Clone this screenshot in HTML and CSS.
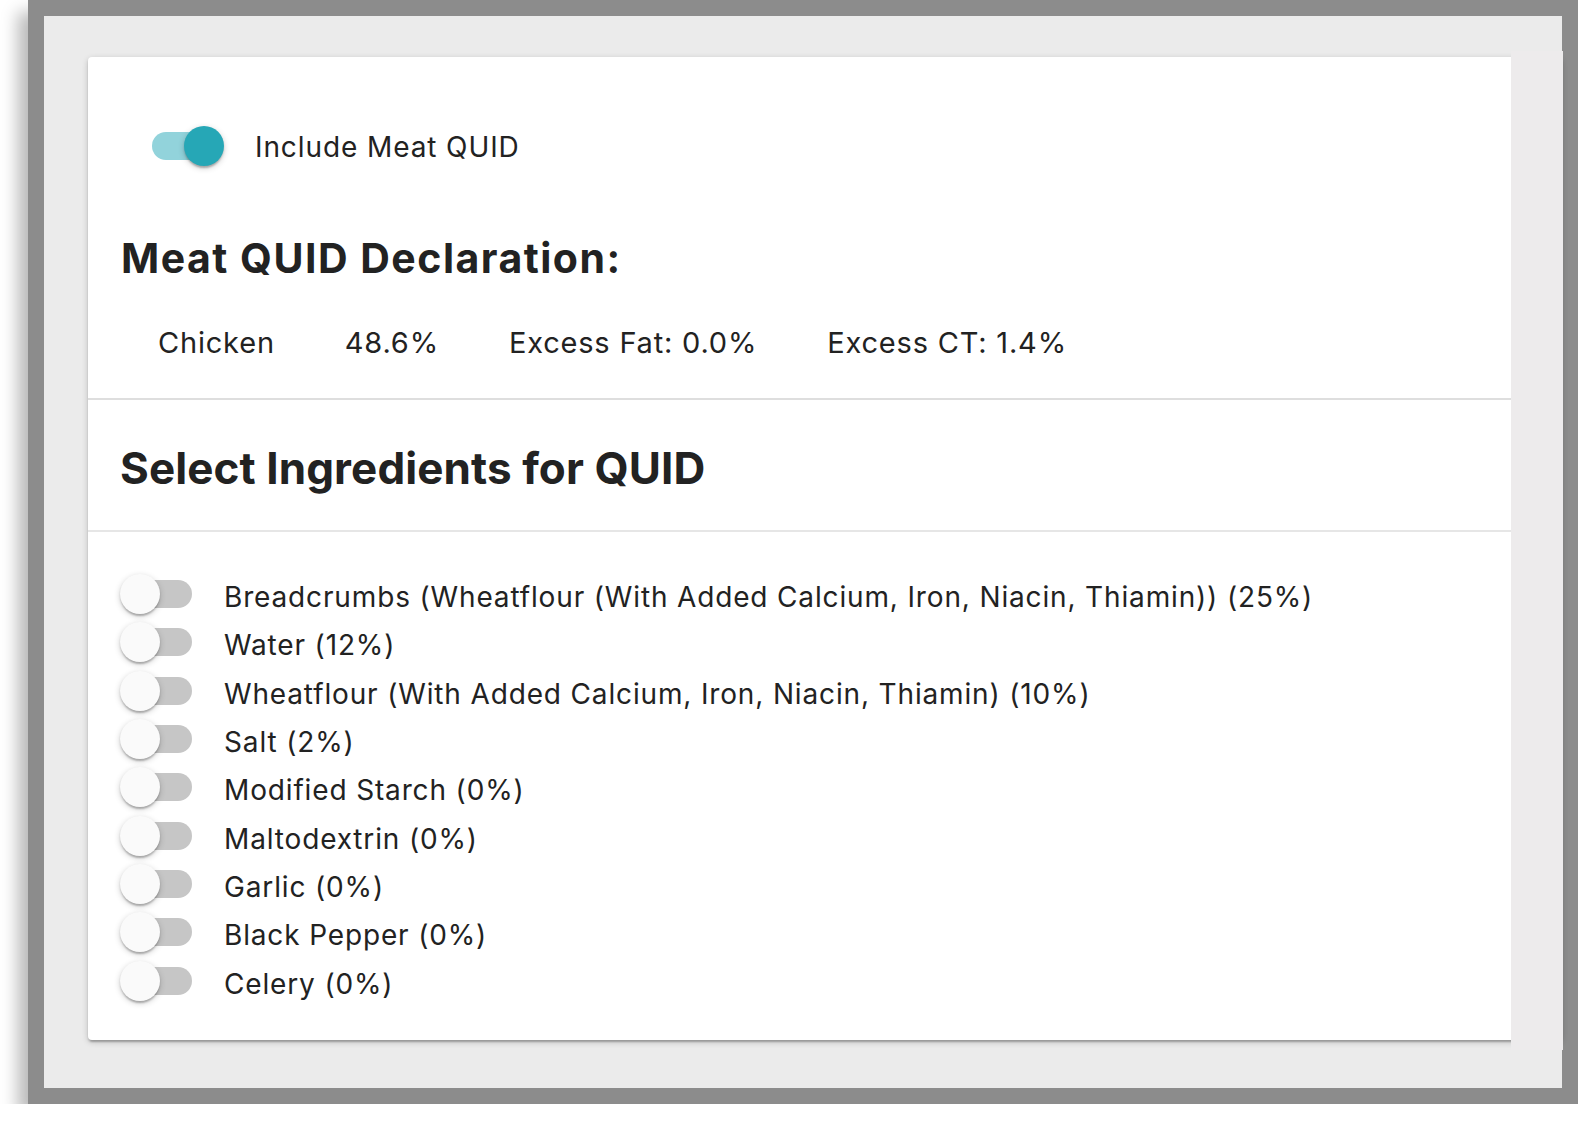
FILE: index.html
```html
<!DOCTYPE html>
<html lang="en">
<head>
<meta charset="utf-8">
<title>Meat QUID</title>
<link rel="stylesheet" href="styles.css">
</head>
<body>
<div class="frame">
  <div class="stage">
    <div class="card">
      <div class="top">
        <div class="main-toggle">
          <span class="switch on"><span class="track"></span><span class="thumb"></span></span>
          <span class="main-label">Include Meat QUID</span>
        </div>
        <h2 class="decl-title">Meat QUID Declaration:</h2>
        <div class="values">
          <span class="value">Chicken</span>
          <span class="value">48.6%</span>
          <span class="value">Excess Fat: 0.0%</span>
          <span class="value">Excess CT: 1.4%</span>
        </div>
      </div>
      <div class="divider"></div>
      <div class="select-head">
        <h2 class="select-title">Select Ingredients for QUID</h2>
      </div>
      <div class="divider light"></div>
      <ul class="ingredients">
        <li class="ing"><span class="switch"><span class="track"></span><span class="thumb"></span></span><span class="ing-label">Breadcrumbs (Wheatflour (With Added Calcium, Iron, Niacin, Thiamin)) (25%)</span></li>
        <li class="ing"><span class="switch"><span class="track"></span><span class="thumb"></span></span><span class="ing-label">Water (12%)</span></li>
        <li class="ing"><span class="switch"><span class="track"></span><span class="thumb"></span></span><span class="ing-label">Wheatflour (With Added Calcium, Iron, Niacin, Thiamin) (10%)</span></li>
        <li class="ing"><span class="switch"><span class="track"></span><span class="thumb"></span></span><span class="ing-label">Salt (2%)</span></li>
        <li class="ing"><span class="switch"><span class="track"></span><span class="thumb"></span></span><span class="ing-label">Modified Starch (0%)</span></li>
        <li class="ing"><span class="switch"><span class="track"></span><span class="thumb"></span></span><span class="ing-label">Maltodextrin (0%)</span></li>
        <li class="ing"><span class="switch"><span class="track"></span><span class="thumb"></span></span><span class="ing-label">Garlic (0%)</span></li>
        <li class="ing"><span class="switch"><span class="track"></span><span class="thumb"></span></span><span class="ing-label">Black Pepper (0%)</span></li>
        <li class="ing"><span class="switch"><span class="track"></span><span class="thumb"></span></span><span class="ing-label">Celery (0%)</span></li>
      </ul>
    </div>
    <div class="strip"></div>
  </div>
</div>
</body>
</html>
```

FILE: styles.css
```css
html, body {
  margin: 0;
  padding: 0;
  background: #ffffff;
  overflow: hidden;
}
body {
  font-family: Inter, Roboto, "Liberation Sans", sans-serif;
  color: #222222;
}
.frame {
  box-sizing: border-box;
  margin-left: 28px;
  width: 1550px;
  height: 1104px;
  border: 16px solid #8c8c8c;
  box-shadow: -10px 12px 16px rgba(0, 0, 0, 0.28);
}
.stage {
  position: relative;
  height: 100%;
  background: #ebebeb;
  padding: 41px 0 0 44px;
  box-sizing: border-box;
}
.card {
  width: 1474px;
  height: 983px;
  background: #ffffff;
  border-radius: 4px;
  box-shadow: 0 2px 6px rgba(0, 0, 0, 0.2), 0 2px 2px rgba(0, 0, 0, 0.14), 0 4px 2px -2px rgba(0, 0, 0, 0.12);
  box-sizing: border-box;
}
.strip {
  position: absolute;
  left: 1467px;
  top: 35px;
  width: 52px;
  height: 999px;
  background: #edebec;
}
.top {
  padding: 69px 0 0 0;
}
.main-toggle {
  display: flex;
  align-items: center;
  height: 40px;
  padding-left: 64px;
}
.switch {
  position: relative;
  display: inline-block;
  width: 72px;
  height: 40px;
  flex: none;
}
.track {
  position: absolute;
  left: 4px;
  top: 6px;
  width: 68px;
  height: 28px;
  border-radius: 14px;
  background: #c6c6c6;
}
.thumb {
  position: absolute;
  left: 0;
  top: 0;
  width: 40px;
  height: 40px;
  border-radius: 50%;
  background: #fafafa;
  box-shadow: 0 2px 6px rgba(0, 0, 0, 0.2), 0 2px 2px rgba(0, 0, 0, 0.14), 0 4px 2px -2px rgba(0, 0, 0, 0.12);
}
.switch.on .track {
  left: 0;
  background: #92d3db;
}
.switch.on .thumb {
  left: 32px;
  background: #26a7b6;
}
.main-label {
  margin-left: 31px;
  padding-top: 2px;
  font-size: 28px;
  letter-spacing: 0.9px;
}
.decl-title {
  margin: 68px 0 0 33px;
  font-size: 41px;
  line-height: 48px;
  font-weight: 700;
  letter-spacing: 1.5px;
}
.values {
  display: flex;
  margin: 43px 0 0 35px;
  font-size: 29px;
  line-height: 36px;
  letter-spacing: 0.8px;
}
.value {
  padding: 0 35px;
}
.divider {
  height: 2px;
  background: #dedede;
  margin-top: 37px;
}
.divider.light {
  background: #e6e6e6;
  margin-top: 0;
}
.select-head {
  padding: 41px 0 35px 32px;
}
.select-title {
  margin: 0;
  font-size: 44px;
  line-height: 54px;
  font-weight: 700;
  letter-spacing: 0.1px;
}
.ingredients {
  list-style: none;
  margin: 0;
  padding: 38px 0 0 32px;
}
.ing {
  display: flex;
  align-items: center;
  height: 48.3px;
}
.ing-label {
  margin-left: 32px;
  font-size: 28px;
  padding-top: 6px;
  letter-spacing: 0.85px;
}
```
